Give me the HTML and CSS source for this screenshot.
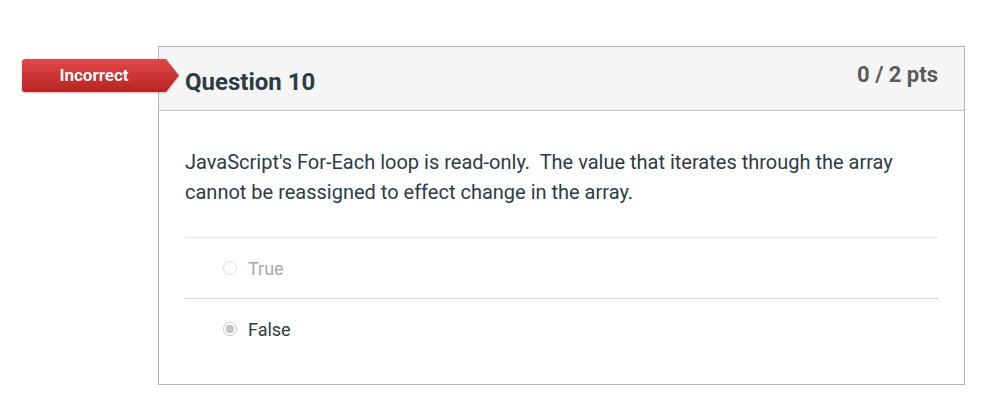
FILE: index.html
```html
<!DOCTYPE html>
<html lang="en">
<head>
    <meta charset="UTF-8">
    <meta name="viewport" content="width=device-width, initial-scale=1.0">
    <title>Question 10</title>
    <link rel="stylesheet" href="styles.css">
</head>
<body>
    <div class="page">
        <div class="question">
            <div class="badge-wrap">
                <div class="badge">Incorrect</div>
            </div>
            <div class="question-header">
                <h2 class="question-title">Question 10</h2>
                <span class="points">0 / 2 pts</span>
            </div>
            <div class="question-body">
                <p class="question-text">JavaScript's For-Each loop is read-only.&nbsp; The value that iterates through the array cannot be reassigned to effect change in the array.</p>
                <div class="answers">
                    <div class="answer muted">
                        <span class="radio"></span>
                        <span class="answer-label">True</span>
                    </div>
                    <div class="answer">
                        <span class="radio checked"></span>
                        <span class="answer-label">False</span>
                    </div>
                </div>
            </div>
        </div>
    </div>
</body>
</html>
```

FILE: styles.css
```css
body {
    font-family: Roboto, "Liberation Sans", Arial, sans-serif;
    background-color: #fff;
    color: #2d3b45;
    margin: 0;
}

.page {
    padding: 46px 0 0 158px;
}

.question {
    position: relative;
    width: 805px;
    border: 1px solid #b4b4b4;
}

/* red ribbon hanging off the left edge */
.badge-wrap {
    position: absolute;
    left: -137px;
    top: 12px;
    filter: drop-shadow(0 1px 1px rgba(0, 0, 0, 0.25));
}

.badge {
    width: 144px;
    height: 33px;
    padding-right: 13px;
    line-height: 33px;
    text-align: center;
    color: #fff;
    font-size: 17px;
    font-weight: 700;
    background: linear-gradient(#e34848, #b82323);
    border-radius: 3px 0 0 3px;
    clip-path: polygon(0 0, 144px 0, 157px 50%, 144px 100%, 0 100%);
}

.question-header {
    display: flex;
    justify-content: space-between;
    height: 63px;
    padding: 0 26px;
    background-color: #f5f5f5;
    border-bottom: 1px solid #c4c4c4;
}

.question-title {
    margin: 0;
    padding-top: 20px;
    font-size: 24px;
    font-weight: 700;
    line-height: 30px;
}

.points {
    padding-top: 15px;
    font-size: 22px;
    font-weight: 700;
    line-height: 26px;
    color: #5b5b5b;
}

.question-body {
    padding: 36px 26px 25px;
}

.question-text {
    margin: 0 0 30px;
    font-size: 20px;
    line-height: 30px;
}

.answer {
    display: flex;
    align-items: center;
    height: 60px;
    padding-left: 38px;
    border-top: 1px solid #e3e3e3;
    font-size: 18px;
}

.answer + .answer {
    border-top-color: #d6d6d6;
}

.answer.muted {
    color: #a8a8a8;
}

.radio {
    box-sizing: border-box;
    width: 14px;
    height: 14px;
    margin-right: 11px;
    border: 1px solid #e0e0e0;
    border-radius: 50%;
}

.radio.checked {
    border-color: #c8c8c8;
    background: radial-gradient(circle, #c4c4c4 0 4px, #fff 4.5px);
}
```
